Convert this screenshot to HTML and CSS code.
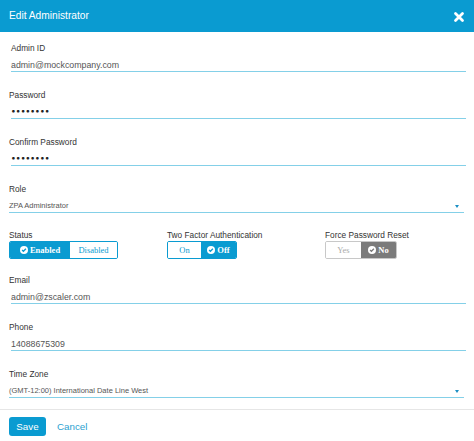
FILE: index.html
```html
<!DOCTYPE html>
<html>
<head>
<meta charset="utf-8">
<link rel="stylesheet" href="styles.css">
</head>
<body>
<div class="modal">
  <div class="header">
    <span class="title">Edit Administrator</span>
    <svg class="close" width="12" height="12" viewBox="0 0 12 12"><path d="M2.5 2.5 L9.5 9.5 M9.5 2.5 L2.5 9.5" stroke="#fff" stroke-width="2.8" stroke-linecap="round"/></svg>
  </div>
  <div class="form">
    <div class="field">
      <div class="label label-in">Admin ID</div>
      <div class="input text">admin@mockcompany.com</div>
    </div>
    <div class="field">
      <div class="label">Password</div>
      <div class="input text dots">&#8226;&#8226;&#8226;&#8226;&#8226;&#8226;&#8226;&#8226;</div>
    </div>
    <div class="field">
      <div class="label">Confirm Password</div>
      <div class="input text dots">&#8226;&#8226;&#8226;&#8226;&#8226;&#8226;&#8226;&#8226;</div>
    </div>
    <div class="field">
      <div class="label">Role</div>
      <div class="input select"><span>ZPA Administrator</span><span class="caret"></span></div>
    </div>
    <div class="field toggles-row">
      <div class="tcol">
        <div class="label short">Status</div>
        <div class="toggle blue">
          <span class="seg on w61"><svg class="chk" width="8" height="8" viewBox="0 0 8 8"><circle cx="4" cy="4" r="4" fill="#fff"/><path d="M2.1 4.1 L3.4 5.3 L5.9 2.8" stroke="#0a9bd1" stroke-width="1.3" fill="none"/></svg>Enabled</span>
          <span class="seg w47">Disabled</span>
        </div>
      </div>
      <div class="tcol">
        <div class="label short">Two Factor Authentication</div>
        <div class="toggle blue">
          <span class="seg w34">On</span>
          <span class="seg on w36"><svg class="chk" width="8" height="8" viewBox="0 0 8 8"><circle cx="4" cy="4" r="4" fill="#fff"/><path d="M2.1 4.1 L3.4 5.3 L5.9 2.8" stroke="#0a9bd1" stroke-width="1.3" fill="none"/></svg>Off</span>
        </div>
      </div>
      <div class="tcol">
        <div class="label short">Force Password Reset</div>
        <div class="toggle gray">
          <span class="seg w36">Yes</span>
          <span class="seg on w35"><svg class="chk" width="8" height="8" viewBox="0 0 8 8"><circle cx="4" cy="4" r="4" fill="#fff"/><path d="M2.1 4.1 L3.4 5.3 L5.9 2.8" stroke="#7b7b7b" stroke-width="1.3" fill="none"/></svg>No</span>
        </div>
      </div>
    </div>
    <div class="field">
      <div class="label">Email</div>
      <div class="input text">admin@zscaler.com</div>
    </div>
    <div class="field">
      <div class="label">Phone</div>
      <div class="input text">14088675309</div>
    </div>
    <div class="field last">
      <div class="label">Time Zone</div>
      <div class="input select"><span>(GMT-12:00) International Date Line West</span><span class="caret"></span></div>
    </div>
  </div>
  <div class="footer">
    <button class="save">Save</button>
    <span class="cancel">Cancel</span>
  </div>
</div>
</body>
</html>
```
FILE: styles.css
```css
html, body {
  margin: 0;
  padding: 0;
  background: #fff;
}
body {
  font-family: "Liberation Sans", Arial, sans-serif;
  width: 474px;
  height: 441px;
  overflow: hidden;
}
.header {
  height: 32px;
  background: #0a9bd1;
  display: flex;
  align-items: center;
  justify-content: space-between;
  padding: 0 9px 0 9px;
}
.title {
  color: #fff;
  font-size: 10.2px;
  line-height: 12px;
}
.close {
  margin-top: 1px;
}
.form {
  padding: 10px 8px 0 9px;
}
.field {
  margin-bottom: 17px;
}
.field.last {
  margin-bottom: 11px;
}
.label {
  font-size: 8.3px;
  line-height: 12px;
  color: #333;
}
.label-in {
  padding-left: 2px;
}
.label.short {
  line-height: 11px;
}
.input {
  height: 12px;
  padding-top: 5px;
  line-height: 12px;
  border-bottom: 1px solid #84d0e8;
  color: #555;
}
.input.text {
  margin-left: 2px;
  font-size: 8.8px;
}
.input.dots {
  color: #222;
  font-size: 7.4px;
  font-weight: bold;
  letter-spacing: 0.1px;
  font-family: "DejaVu Sans", sans-serif;
}
.input.select {
  margin-right: 2px;
  font-size: 7.5px;
  color: #555;
  display: flex;
  justify-content: space-between;
  align-items: center;
}
.caret {
  width: 0;
  height: 0;
  border-left: 2.5px solid transparent;
  border-right: 2.5px solid transparent;
  border-top: 3px solid #1a8fc4;
  margin-right: 5px;
}
.toggles-row {
  display: grid;
  grid-template-columns: 158px 158px 1fr;
  margin-bottom: 15px;
}
.toggle {
  display: flex;
  height: 18px;
  width: max-content;
  border-radius: 2px;
  overflow: hidden;
  box-sizing: border-box;
}
.toggle.blue {
  border: 1px solid #0a9bd1;
}
.toggle.gray {
  border: 1px solid #c8c8c8;
}
.seg {
  display: flex;
  align-items: center;
  justify-content: center;
  font-family: "Liberation Serif", "Times New Roman", serif;
  font-size: 8.5px;
  box-sizing: border-box;
}
.toggle.blue .seg {
  color: #0a9bd1;
  background: #fff;
}
.toggle.blue .seg.on {
  color: #fff;
  background: #0a9bd1;
  font-weight: bold;
}
.toggle.gray .seg {
  color: #aaa;
  background: #fff;
}
.toggle.gray .seg.on {
  color: #fff;
  background: #7b7b7b;
  font-weight: bold;
}
.chk {
  margin-right: 2px;
}
.w61 { width: 60px; }
.w47 { width: 47px; }
.w34 { width: 33px; }
.w36 { width: 35px; }
.w35 { width: 35px; }
.footer {
  border-top: 1px solid #e6e6e6;
  padding: 7px 9px 0 9px;
  display: flex;
  align-items: center;
}
.save {
  background: #0a9bd1;
  color: #fff;
  border: none;
  border-radius: 3px;
  height: 19px;
  width: 37px;
  padding: 0;
  font-family: "Liberation Sans", Arial, sans-serif;
  font-size: 9.8px;
}
.cancel {
  margin-left: 11px;
  color: #2a9fd0;
  font-size: 9.8px;
}
```
